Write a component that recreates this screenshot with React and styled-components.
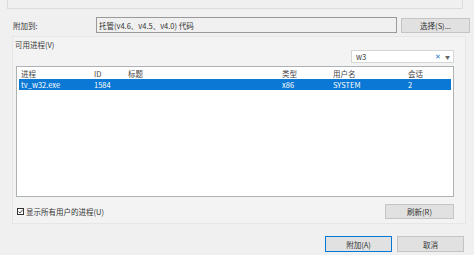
import React from "react";
import styled, { createGlobalStyle } from "styled-components";

const Global = createGlobalStyle`
  html, body { margin: 0; padding: 0; background: #f0f0f0; }
  body { font-family: "Noto Sans CJK SC", "Microsoft YaHei", sans-serif; }
`;

const Dialog = styled.div`
  width: 474px;
  height: 255px;
  overflow: hidden;
  background: #f0f0f0;
  font-family: "Noto Sans CJK SC", sans-serif;
  font-size: 7.5px;
  color: #333;
  display: flex;
  flex-direction: column;
`;

const TopStrip = styled.div`
  margin: 0 11px 0 7px;
  height: 9px;
  border: 1px solid #dcdcdc;
  border-top: none;
  box-sizing: border-box;
`;

const AttachRow = styled.div`
  display: flex;
  align-items: center;
  gap: 4px;
  margin-top: 8px;
  padding-left: 13px;
`;

const Label = styled.span`
  width: ${(p) => p.$w || "auto"};
  line-height: 11px;
  white-space: nowrap;
  color: #3a3a3a;
`;

const ReadField = styled.div`
  width: 301px;
  height: 16px;
  box-sizing: border-box;
  border: 1px solid #9a9a9a;
  background: #f0f0f0;
  padding-left: 2px;
  margin-left: -4px;
  display: flex;
  align-items: center;
  white-space: nowrap;
  color: #333;
`;

const Button = styled.button`
  width: ${(p) => p.$w}px;
  height: ${(p) => p.$h || 16}px;
  margin: 0;
  padding: 0;
  box-sizing: border-box;
  border: 1px solid ${(p) => (p.$default ? "#0078d7" : "#c4c4c4")};
  background: #e1e1e1;
  font-family: inherit;
  font-size: 7.5px;
  color: #333;
  display: flex;
  align-items: center;
  justify-content: center;
  white-space: nowrap;
`;

const Group = styled.div`
  margin: 3px 8px 0 12px;
  height: 188px;
  box-sizing: border-box;
  border: 1px solid #e6e6e6;
  background: #f3f3f3;
  display: flex;
  flex-direction: column;
  padding: 2px 11px 0 3px;
`;

const GroupTitle = styled.div`
  line-height: 11px;
  color: #3a3a3a;
  margin-left: -1px;
`;

const SearchRow = styled.div`
  display: flex;
  justify-content: flex-end;
`;

const SearchBox = styled.div`
  width: 103px;
  height: 13px;
  box-sizing: border-box;
  border: 1px solid #d6d6d6;
  background: #fff;
  display: flex;
  align-items: center;
  padding: 0 3px 0 4px;
  color: #333;
`;

const SearchText = styled.span`
  flex: 1;
`;

const Clear = styled.span`
  color: #2f7fd0;
  font-family: "DejaVu Sans", sans-serif;
  font-size: 7px;
  margin-right: 4px;
`;

const Caret = styled.span`
  color: #666;
  font-size: 5px;
`;

const List = styled.div`
  margin-top: 3px;
  height: 131px;
  box-sizing: border-box;
  border: 1px solid #adb2b5;
  background: #fff;
  padding-top: 1px;
`;

const Row = styled.div`
  display: grid;
  grid-template-columns: 73px 34px 154px 51px 75px 1fr;
  height: 11px;
  line-height: 11px;
  margin: 0 2px;
  padding-left: 2px;
  white-space: nowrap;
  background: ${(p) => (p.$selected ? "#0a78d4" : "transparent")};
  color: ${(p) => (p.$selected ? "#fff" : "#444")};
`;

const GroupFooter = styled.div`
  display: flex;
  align-items: center;
  justify-content: space-between;
  margin-top: 7px;
  padding-left: 1px;
`;

const CheckLabel = styled.label`
  display: flex;
  align-items: center;
  gap: 2px;
  color: #333;
`;

const Box = styled.span`
  width: 7px;
  height: 7px;
  box-sizing: border-box;
  border: 1px solid #333;
  background: #fff;
  display: flex;
  align-items: center;
  justify-content: center;
`;

const Footer = styled.div`
  display: flex;
  justify-content: flex-end;
  gap: 5px;
  margin-top: 12px;
  padding-right: 10px;
`;

const cols = ["进程", "ID", "标题", "类型", "用户名", "会话"];
const rows = [["tv_w32.exe", "1584", "", "x86", "SYSTEM", "2"]];

export default function App() {
  return (
    <Dialog>
      <Global />
      <TopStrip />
      <AttachRow>
        <Label $w="83px">附加到:</Label>
        <ReadField>托管(v4.6、v4.5、v4.0) 代码</ReadField>
        <Button $w={69} $h={15}>选择(S)...</Button>
      </AttachRow>
      <Group>
        <GroupTitle>可用进程(V)</GroupTitle>
        <SearchRow>
          <SearchBox>
            <SearchText>w3</SearchText>
            <Clear>✕</Clear>
            <Caret>▼</Caret>
          </SearchBox>
        </SearchRow>
        <List>
          <Row>
            {cols.map((c) => (
              <span key={c}>{c}</span>
            ))}
          </Row>
          {rows.map((r, i) => (
            <Row key={i} $selected>
              {r.map((c, j) => (
                <span key={j}>{c}</span>
              ))}
            </Row>
          ))}
        </List>
        <GroupFooter>
          <CheckLabel>
            <Box>
              <svg width="5" height="5" viewBox="0 0 5 5">
                <path d="M0.5 2.6 L2 4 L4.6 0.8" fill="none" stroke="#333" strokeWidth="0.9" />
              </svg>
            </Box>
            显示所有用户的进程(U)
          </CheckLabel>
          <Button $w={69} $h={15}>刷新(R)</Button>
        </GroupFooter>
      </Group>
      <Footer>
        <Button $w={67} $default>附加(A)</Button>
        <Button $w={67}>取消</Button>
      </Footer>
    </Dialog>
  );
}
